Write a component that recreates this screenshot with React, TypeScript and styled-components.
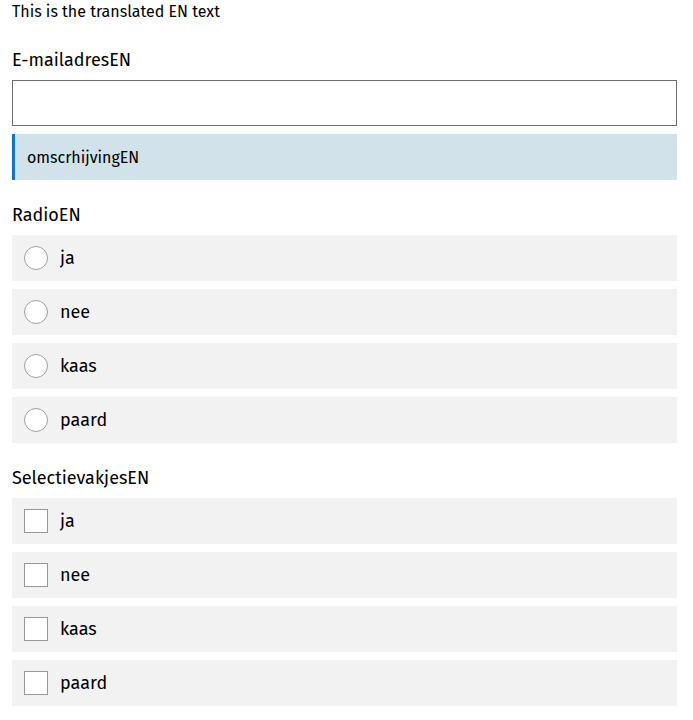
import React, { FC } from 'react';
import styled, { createGlobalStyle } from 'styled-components';

const GlobalStyle = createGlobalStyle`
  html, body {
    margin: 0;
    padding: 0;
    background: #fff;
  }
  body {
    font-family: 'Fira Sans', 'Open Sans', 'Noto Sans', sans-serif;
    color: #000;
  }
`;

const Page = styled.div`
  padding: 2px 16px 16px 12px;
`;

const Intro = styled.p`
  margin: 0;
  font-size: 16px;
  line-height: 20px;
`;

const Field = styled.div<{ top?: number }>`
  margin-top: ${p => p.top ?? 26}px;
`;

const FieldLabel = styled.label`
  display: block;
  font-size: 18px;
  line-height: 24px;
  margin-bottom: 8px;
`;

const TextInput = styled.input`
  display: block;
  box-sizing: border-box;
  width: 100%;
  height: 46px;
  margin: 0;
  padding: 0 12px;
  border: 1px solid #6e6e6e;
  border-radius: 0;
  background: #fff;
  font: inherit;
  font-size: 16px;
`;

const Description = styled.div`
  box-sizing: border-box;
  height: 46px;
  margin-top: 8px;
  padding: 0 12px;
  display: flex;
  align-items: center;
  background: #d2e2ea;
  border-left: 3px solid #0b78c8;
  font-size: 16px;
`;

const OptionList = styled.div`
  display: flex;
  flex-direction: column;
  gap: 8px;
`;

const Option = styled.label`
  box-sizing: border-box;
  height: 46px;
  display: flex;
  align-items: center;
  gap: 12px;
  padding: 0 12px 1px;
  background: #f2f2f2;
  font-size: 18px;
  cursor: pointer;
`;

const Control = styled.span<{ round?: boolean }>`
  box-sizing: border-box;
  width: 24px;
  height: 24px;
  flex: none;
  background: #fff;
  border: 1px solid ${p => (p.round ? '#a0a0a0' : '#999')};
  border-radius: ${p => (p.round ? '50%' : '0')};
`;

const options = ['ja', 'nee', 'kaas', 'paard'];

const ChoiceGroup: FC<{ label: string; round?: boolean; top: number }> = ({
  label,
  round,
  top,
}) => (
  <Field top={top}>
    <FieldLabel as="div">{label}</FieldLabel>
    <OptionList>
      {options.map(o => (
        <Option key={o}>
          <Control round={round} />
          {o}
        </Option>
      ))}
    </OptionList>
  </Field>
);

const App: FC = () => (
  <>
    <GlobalStyle />
    <Page>
      <Intro>This is the translated EN text</Intro>
      <Field>
        <FieldLabel htmlFor="email">E-mailadresEN</FieldLabel>
        <TextInput id="email" type="email" />
        <Description>omscrhijvingEN</Description>
      </Field>
      <ChoiceGroup label="RadioEN" round top={23} />
      <ChoiceGroup label="SelectievakjesEN" top={23} />
    </Page>
  </>
);

export default App;
